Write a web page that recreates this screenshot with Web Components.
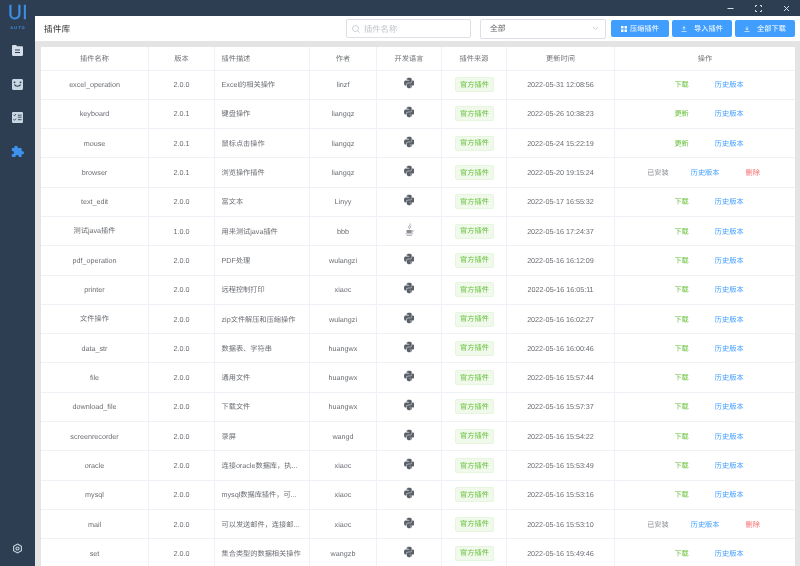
<!DOCTYPE html>
<html lang="zh">
<head>
<meta charset="utf-8">
<title>插件库</title>
<style>
html, body { margin: 0; height: 100%; overflow: hidden; background: #2d3e52; }
body { font-family: "Liberation Sans", "Noto Sans CJK SC", sans-serif; text-rendering: geometricPrecision; }
</style>
</head>
<body>
<app-shell>
  <side-nav slot="side"></side-nav>
  <title-bar slot="top"></title-bar>
  <plugin-toolbar slot="top">插件库</plugin-toolbar>
  <plugin-table slot="main"></plugin-table>
</app-shell>
<script>
class AppShell extends HTMLElement {
  constructor() {
    super();
    this.attachShadow({ mode: 'open' }).innerHTML = `
<style>
:host { display: grid; grid-template-columns: 35px 1fr; width: 800px; height: 566px; overflow: hidden; background: #2d3e52; }
.right { display: flex; flex-direction: column; min-width: 0; height: 566px; }
.main { flex: 1; min-height: 0; overflow: hidden; background: #e4e4e4; padding: 6px 5px 0 6px; }
</style>
<slot name="side"></slot>
<div class="right">
  <slot name="top"></slot>
  <div class="main"><slot name="main"></slot></div>
</div>`;
  }
}
customElements.define('app-shell', AppShell);

class SideNav extends HTMLElement {
  constructor() {
    super();
    this.attachShadow({ mode: 'open' }).innerHTML = `
<style>
:host { display: flex; flex-direction: column; align-items: center; height: 566px; background: #2d3e52; }
.logo { display: flex; flex-direction: column; align-items: center; height: 32px; color: #3e8fe6; padding-top: 3px; will-change: transform; }
.logo b { font: 400 19px/19px "Liberation Sans", sans-serif; letter-spacing: 0.5px; -webkit-text-stroke: .3px #3e8fe6; transform: scaleY(1.08); transform-origin: top; }
.logo i { font: 700 4px/5px "Liberation Sans", sans-serif; letter-spacing: 1px; margin-top: 3px; }
.nav { display: flex; flex-direction: column; gap: 20.5px; margin-top: 9px; }
svg { display: block; width: 13px; height: 13px; }
.foot { margin-top: auto; margin-bottom: 12px; }
.foot svg { width: 11px; height: 11px; }
</style>
<div class="logo"><b>UI</b><i>AUTO</i></div>
<div class="nav">
  <svg viewBox="0 0 13 13"><path fill="#d3deea" d="M1 2.200C1 1.500 1.500 1 2.200 1H5l1.200 1.200h4.600c.7 0 1.200.5 1.200 1.200v7.400c0 .7-.5 1.200-1.200 1.200H2.200c-.7 0-1.200-.5-1.200-1.200z"/><path stroke="#2d3e52" stroke-width="1" d="M4 6h5M4 8.500h5"/></svg>
  <svg viewBox="0 0 13 13"><path fill="#c9d6e4" d="M1 2.500C1 1.700 1.700 1 2.500 1h8c.8 0 1.500.7 1.500 1.500v8c0 .8-.7 1.500-1.500 1.500h-8C1.700 12 1 11.300 1 10.500z"/><path fill="none" stroke="#2d3e52" stroke-width="1.100" d="M3.500 6.500c.6 2.300 5.400 2.300 6 0"/><circle cx="3.500" cy="4.300" r=".9" fill="#2d3e52"/><circle cx="9.500" cy="4.300" r=".9" fill="#2d3e52"/></svg>
  <svg viewBox="0 0 13 13"><rect x="1" y="1" width="11" height="11" rx="1" fill="#c9d6e4"/><path fill="none" stroke="#2d3e52" stroke-width=".9" d="M2.500 3.800l1 1 1.500-1.800M2.500 8.300l1 1 1.500-1.800M6.800 4.200h3.800M6.800 6.200h3.800M6.800 8.700h3.800"/></svg>
  <svg viewBox="0 0 13 13"><path fill="#3d92ec" d="M5 .8c1.300 0 2 .9 1.700 2.200h3.100c.5 0 .9.4.9.9v2.400c1.300-.5 2.300.2 2.300 1.400s-1 1.900-2.300 1.400v2.100c0 .5-.4.9-.9.9H7.600c.4-1.300-.3-2.200-1.500-2.200s-1.900.9-1.500 2.200H1.700c-.5 0-.9-.4-.9-.9V9.100C2 9.500 3 8.800 3 7.600S2 5.700.8 6.100V3.900c0-.5.4-.9.9-.9h1.600C3 1.700 3.700.8 5 .8z"/></svg>
</div>
<div class="foot">
  <svg viewBox="0 0 13 13"><path fill="none" stroke="#c9d6e4" stroke-width="1.300" d="M6.500 1.200l4.600 2.650v5.300L6.500 11.800 1.900 9.150v-5.300z"/><circle cx="6.500" cy="6.500" r="1.800" fill="none" stroke="#c9d6e4" stroke-width="1.300"/></svg>
</div>`;
  }
}
customElements.define('side-nav', SideNav);

class TitleBar extends HTMLElement {
  constructor() {
    super();
    this.attachShadow({ mode: 'open' }).innerHTML = `
<style>
:host { display: flex; justify-content: flex-end; align-items: center; height: 16px; background: #2d3e52; }
svg { display: block; width: 7px; height: 7px; margin-right: 21px; }
svg:last-child { margin-right: 10px; }
path { fill: none; stroke: #d5dbe2; stroke-width: 1; }
</style>
<svg viewBox="0 0 7 7"><path d="M.5 3.500h6"/></svg>
<svg viewBox="0 0 7 7"><path d="M.5 2V.5H2M5 .5h1.500V2M6.500 5v1.500H5M2 6.500H.5V5"/></svg>
<svg viewBox="0 0 7 7"><path d="M1 1l5 5M6 1l-5 5"/></svg>`;
  }
}
customElements.define('title-bar', TitleBar);

class ActionButton extends HTMLElement {
  constructor() {
    super();
    this.attachShadow({ mode: 'open' }).innerHTML = `
<style>
:host { display: inline-flex; align-items: center; justify-content: center; gap: var(--gap, 3px); height: 17px; border-radius: 2px; background: #409eff; color: #fff; font-size: 7.200px; box-sizing: border-box; }
</style>
<slot name="icon"></slot><slot></slot>`;
  }
}
customElements.define('action-button', ActionButton);

class PluginToolbar extends HTMLElement {
  constructor() {
    super();
    this.attachShadow({ mode: 'open' }).innerHTML = `
<style>
:host { display: flex; align-items: center; height: 25px; background: #fff; padding: 0 5px 0 9px; font-size: 8.700px; color: #303133; will-change: transform; }
.title { flex: 1; }
.search { display: flex; align-items: center; gap: 4px; box-sizing: border-box; width: 125px; height: 19px; border: 1px solid #dcdfe6; border-radius: 2px; padding-left: 5px; color: #c0c4cc; font-size: 8.300px; }
.select { display: flex; align-items: center; justify-content: space-between; box-sizing: border-box; width: 126px; height: 20px; margin-left: 9px; border: 1px solid #dcdfe6; border-radius: 2px; padding: 0 6px 0 9px; color: #606266; font-size: 7.800px; }
action-button { margin-left: 3px; }
action-button:first-of-type { margin-left: 5px; width: 58px; }
action-button.w { width: 60px; --gap: 7px; }
svg { display: block; }
</style>
<div class="title"><slot></slot></div>
<div class="search">
  <svg width="8" height="8" viewBox="0 0 8 8"><circle cx="3.500" cy="3.500" r="3" fill="none" stroke="#c0c4cc" stroke-width=".8"/><path d="M5.700 5.700l2 2" stroke="#c0c4cc" stroke-width=".8"/></svg>
  插件名称
</div>
<div class="select">全部
  <svg width="7" height="5" viewBox="0 0 7 5"><path d="M1 1l2.500 2.500L6 1" fill="none" stroke="#c0c4cc" stroke-width=".8"/></svg>
</div>
<action-button><svg slot="icon" width="6" height="6" viewBox="0 0 6 6"><path fill="#fff" d="M0 0h2.500v2.500H0zM3.500 0H6v2.500H3.500zM0 3.500h2.500V6H0zM3.500 3.500H6V6H3.500z"/></svg>压缩插件</action-button>
<action-button class="w"><svg slot="icon" width="6" height="6" viewBox="0 0 6 6"><path fill="none" stroke="#fff" stroke-width=".7" d="M3 4V.7M1.600 2L3 .7 4.400 2M.5 5.600h5"/></svg>导入插件</action-button>
<action-button class="w"><svg slot="icon" width="6" height="6" viewBox="0 0 6 6"><path fill="none" stroke="#fff" stroke-width=".7" d="M3 .5v3.300M1.600 2.500L3 3.800l1.400-1.300M.5 5.600h5"/></svg>全部下载</action-button>`;
  }
}
customElements.define('plugin-toolbar', PluginToolbar);

const PY = `<svg width="10.500" height="12" viewBox="0 0 448 512"><path fill="#5a6068" d="M439.800 200.500c-7.700-30.900-22.300-54.200-53.400-54.200h-40.100v47.400c0 36.800-31.200 67.800-66.800 67.800H172.700c-29.200 0-53.400 25-53.400 54.300v101.800c0 29 25.200 46 53.400 54.300 33.800 9.900 66.300 11.700 106.800 0 26.900-7.800 53.400-23.500 53.400-54.300v-40.700H226.200v-13.600h160.200c31.100 0 42.600-21.700 53.400-54.200 11.200-33.500 10.700-65.700 0-108.600zM286.200 404c11.100 0 20.100 9.100 20.100 20.300 0 11.300-9 20.400-20.100 20.400-11 0-20.100-9.200-20.100-20.400.1-11.300 9.100-20.300 20.100-20.300zM167.800 248.100h106.800c29.700 0 53.400-24.500 53.400-54.300V91.900c0-29-24.400-50.700-53.400-55.600-35.800-5.900-74.700-5.600-106.800.1-45.200 8-53.400 24.700-53.400 55.600v40.700h106.900v13.600h-147c-31.100 0-58.300 18.700-66.800 54.200-9.800 40.700-10.200 66.100 0 108.600 7.600 31.600 25.700 54.200 56.800 54.200H101v-48.800c0-35.300 30.500-66.400 66.800-66.400zm-6.700-142.600c-11.100 0-20.100-9.100-20.100-20.300.1-11.300 9-20.400 20.100-20.400 11 0 20.100 9.200 20.100 20.400s-9 20.300-20.100 20.300z"/></svg>`;
const JAVA = `<svg width="11" height="13" viewBox="0 0 11 13"><path fill="none" stroke="#8a8f96" stroke-width=".8" d="M6 .5C7 2.200 4 3 4.800 4.800 5 5.400 5.400 5.800 6 6.300M7.200 2.600C6.300 3.500 6 4 6.800 5.200"/><path fill="#8a8f96" d="M2.500 7h5.200v2c0 .6-.5 1-1 1H3.500c-.6 0-1-.4-1-1z"/><path fill="none" stroke="#8a8f96" stroke-width=".7" d="M7.700 7.500h1c1 0 1 1.500-1 1.500M1.500 10.800h7.500M2.500 12.400h5.500"/></svg>`;

// name, version, description, author, updated, state, language icon
const PLUGINS = [
  ['excel_operation', '2.0.0', 'Excel的相关操作', 'linzf', '2022-05-31 12:08:56', '下载'],
  ['keyboard', '2.0.1', '键盘操作', 'liangqz', '2022-05-26 10:38:23', '更新'],
  ['mouse', '2.0.1', '鼠标点击操作', 'liangqz', '2022-05-24 15:22:19', '更新'],
  ['browser', '2.0.1', '浏览操作插件', 'liangqz', '2022-05-20 19:15:24', '已安装'],
  ['text_edit', '2.0.0', '富文本', 'Linyy', '2022-05-17 16:55:32', '下载'],
  ['测试java插件', '1.0.0', '用来测试java插件', 'bbb', '2022-05-16 17:24:37', '下载', JAVA],
  ['pdf_operation', '2.0.0', 'PDF处理', 'wulangzi', '2022-05-16 16:12:09', '下载'],
  ['printer', '2.0.0', '远程控制打印', 'xiaoc', '2022-05-16 16:05:11', '下载'],
  ['文件操作', '2.0.0', 'zip文件解压和压缩操作', 'wulangzi', '2022-05-16 16:02:27', '下载'],
  ['data_str', '2.0.0', '数据表、字符串', 'huangwx', '2022-05-16 16:00:46', '下载'],
  ['file', '2.0.0', '通用文件', 'huangwx', '2022-05-16 15:57:44', '下载'],
  ['download_file', '2.0.0', '下载文件', 'huangwx', '2022-05-16 15:57:37', '下载'],
  ['screenrecorder', '2.0.0', '录屏', 'wangd', '2022-05-16 15:54:22', '下载'],
  ['oracle', '2.0.0', '连接oracle数据库，执...', 'xiaoc', '2022-05-16 15:53:49', '下载'],
  ['mysql', '2.0.0', 'mysql数据库插件，可...', 'xiaoc', '2022-05-16 15:53:16', '下载'],
  ['mail', '2.0.0', '可以发送邮件，连接邮...', 'xiaoc', '2022-05-16 15:53:10', '已安装'],
  ['set', '2.0.0', '集合类型的数据相关操作', 'wangzb', '2022-05-16 15:49:46', '下载'],
];
const HEADS = ['插件名称', '版本', '插件描述', '作者', '开发语言', '插件来源', '更新时间', '操作'];

class PluginTable extends HTMLElement {
  constructor() {
    super();
    const head = HEADS.map((h, i) => `<div class="c h${i === 2 ? ' left' : ''}">${h}</div>`).join('');
    const rows = PLUGINS.map(p => {
      const ops = p[5] === '已安装'
        ? `<div class="c ops three"><span class="grey">已安装</span><span class="blue">历史版本</span><span class="red">删除</span></div>`
        : `<div class="c ops"><span class="green">${p[5]}</span><span class="blue">历史版本</span></div>`;
      return `<div class="c">${p[0]}</div><div class="c">${p[1]}</div><div class="c left">${p[2]}</div><div class="c">${p[3]}</div><div class="c icon">${p[6] || PY}</div><div class="c"><span class="tag">官方插件</span></div><div class="c">${p[4]}</div>${ops}`;
    }).join('');
    this.attachShadow({ mode: 'open' }).innerHTML = `
<style>
:host { display: block; background: #fff; font-size: 7.200px; color: #6b6e73; will-change: transform; }
.grid { display: grid; grid-template-columns: 108px 66px 95px 67px 65px 65px 108px 180px; grid-template-rows: 23.5px; grid-auto-rows: 29.31px; }
.c { display: flex; align-items: center; justify-content: center; min-width: 0; box-sizing: border-box; border-bottom: 1px solid #eff1f6; border-right: 1px solid #eff1f6; white-space: nowrap; }
.c:nth-child(8n) { border-right: 0; }
.h { color: #707377; padding-top: 1px; }
.left { justify-content: flex-start; padding-left: 6.500px; padding-top: 1px; }
.icon { padding-bottom: 3px; }
.tag { display: inline-flex; align-items: center; height: 15px; padding: 0 4.500px; margin-left: 1px; box-sizing: border-box; background: #f0f9eb; border: 1px solid #e6f5de; border-radius: 2px; color: #67c23a; }
.ops { gap: 26px; padding-left: 8px; padding-top: 1px; }
.ops.three { gap: 22px; padding-left: 0; padding-right: 3px; }
.three .red { margin-left: 4px; }
.green { color: #67c23a; }
.blue { color: #409eff; }
.red { color: #f56c6c; }
.grey { color: #909399; }
</style>
<div class="grid">${head}${rows}</div>`;
  }
}
customElements.define('plugin-table', PluginTable);
</script>
</body>
</html>
